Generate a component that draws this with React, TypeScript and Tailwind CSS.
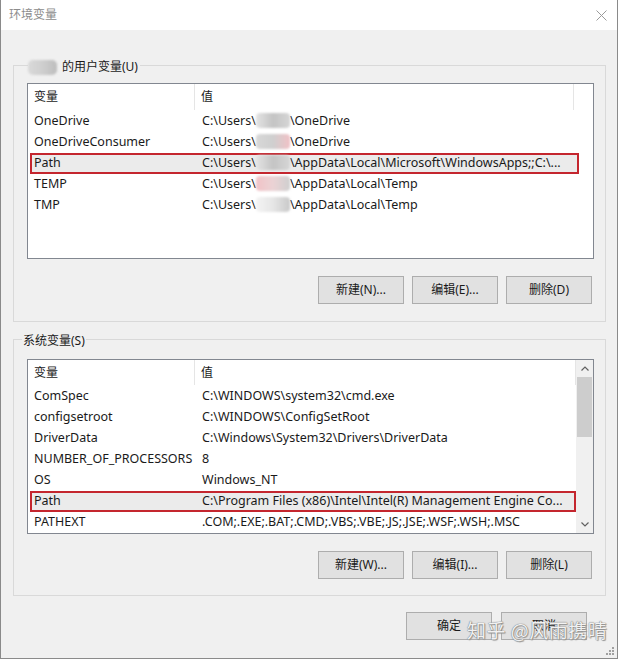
import React from "react";

type Cell = string | { blur: "gray" | "pink" | "mix" | "light" };

const userRows: { name: string; value: Cell[]; marked?: boolean }[] = [
  { name: "OneDrive", value: ["C:\\Users\\", { blur: "gray" }, "\\OneDrive"] },
  { name: "OneDriveConsumer", value: ["C:\\Users\\", { blur: "mix" }, "\\OneDrive"] },
  {
    name: "Path",
    value: ["C:\\Users\\", { blur: "gray" }, "\\AppData\\Local\\Microsoft\\WindowsApps;;C:\\..."],
    marked: true,
  },
  { name: "TEMP", value: ["C:\\Users\\", { blur: "pink" }, "\\AppData\\Local\\Temp"] },
  { name: "TMP", value: ["C:\\Users\\", { blur: "light" }, "\\AppData\\Local\\Temp"] },
];

const systemRows: { name: string; value: Cell[]; marked?: boolean }[] = [
  { name: "ComSpec", value: ["C:\\WINDOWS\\system32\\cmd.exe"] },
  { name: "configsetroot", value: ["C:\\WINDOWS\\ConfigSetRoot"] },
  { name: "DriverData", value: ["C:\\Windows\\System32\\Drivers\\DriverData"] },
  { name: "NUMBER_OF_PROCESSORS", value: ["8"] },
  { name: "OS", value: ["Windows_NT"] },
  { name: "Path", value: ["C:\\Program Files (x86)\\Intel\\Intel(R) Management Engine Co..."], marked: true },
  { name: "PATHEXT", value: [".COM;.EXE;.BAT;.CMD;.VBS;.VBE;.JS;.JSE;.WSF;.WSH;.MSC"] },
];

function Blur({ kind }: { kind: "gray" | "pink" | "mix" | "light" }) {
  const tone = {
    gray: "from-[#e4e4e4] via-[#c4c4c4] to-[#d6d6d6]",
    pink: "from-[#f1c3c7] via-[#ebd3d5] to-[#cfcfcf]",
    mix: "from-[#d8d8d8] via-[#cfcfcf] to-[#f0c1c6]",
    light: "from-[#f4f4f4] via-[#e6e6e6] to-[#c9c9c9]",
  }[kind];
  return (
    <span className={`inline-block w-[34px] h-[15px] rounded-[4px] bg-linear-to-r blur-[1px] ${tone}`} />
  );
}

function Button({ label }: { label: string }) {
  return (
    <div className="w-[86px] h-[28px] flex items-center justify-center bg-[#e1e1e1] border border-[#adadad] text-[#1a1a1a]">
      {label}
    </div>
  );
}

function Row({
  name,
  value,
  marked,
  boxRight,
}: {
  name: string;
  value: Cell[];
  marked?: boolean;
  boxRight: string;
}) {
  return (
    <div className="relative h-[21px] flex items-center whitespace-nowrap text-[12.5px]">
      {marked && (
        <div className={`absolute left-[2px] top-[1px] bottom-[-1px] bg-[#ebebeb] border-2 border-[#c4262e] ${boxRight}`} />
      )}
      <div className="relative w-[168px] pl-[6px]">{name}</div>
      <div className="relative pl-[6px] flex items-center">
        {value.map((v, i) =>
          typeof v === "string" ? <span key={i}>{v}</span> : <Blur key={i} kind={v.blur} />
        )}
      </div>
    </div>
  );
}

function Header({ cls }: { cls: string }) {
  return (
    <div className={`flex items-center ${cls}`}>
      <div className="w-[167px] h-full flex items-center pl-[6px] border-r border-[#e5e5e5]">变量</div>
      <div className="flex-1 h-full flex items-center pl-[6px] border-r border-[#e5e5e5]">值</div>
    </div>
  );
}

export default function App() {
  return (
    <div className="w-[618px] h-[659px] bg-[#f0f0f0] border-x border-b border-[#8a8a8a] text-[12px] leading-[16px] text-[#1a1a1a] font-['Segoe_UI','Noto_Sans','Noto_Sans_CJK_SC',sans-serif] relative overflow-hidden">
      {/* title bar */}
      <div className="h-[30px] bg-white flex items-center justify-between pl-[8px] pr-[10px]">
        <span className="text-[#8c8c8c]">环境变量</span>
        <svg width="11" height="11" viewBox="0 0 11 11">
          <path d="M0.5 0.5 L10.5 10.5 M10.5 0.5 L0.5 10.5" stroke="#9a9a9a" strokeWidth="1" />
        </svg>
      </div>

      {/* user variables */}
      <div className="relative ml-[12px] mt-[35px] w-[593px] h-[257px] border border-[#d9d9d9]">
        <div className="absolute left-[14px] -top-[7px] flex items-center bg-[#f0f0f0] pr-[2px]">
          <span className="inline-block w-[29px] h-[15px] rounded-[5px] bg-linear-to-r from-[#d9d9d9] via-[#cfcfcf] to-[#bdbdbd] blur-[1px] mr-[5px]" />
          <span>的用户变量(U)</span>
        </div>
        <div className="ml-[13px] mt-[17px] w-[567px] h-[176px] bg-white border border-[#828790] overflow-hidden">
          <Header cls="h-[26px] w-[546px]" />
          {userRows.map((r) => (
            <Row key={r.name} {...r} boxRight="right-[14px]" />
          ))}
        </div>
        <div className="ml-[13px] mt-[17px] w-[567px] flex justify-end gap-[8px] pr-[2px]">
          <Button label="新建(N)..." />
          <Button label="编辑(E)..." />
          <Button label="删除(D)" />
        </div>
      </div>

      {/* system variables */}
      <div className="relative ml-[12px] mt-[17px] w-[593px] h-[257px] border border-[#d9d9d9]">
        <div className="absolute left-[8px] -top-[7px] bg-[#f0f0f0] px-[1px]">系统变量(S)</div>
        <div className="ml-[13px] mt-[19px] w-[567px] h-[175px] bg-white border border-[#828790] overflow-hidden flex">
          <div className="flex-1">
            <Header cls="h-[25px] w-full" />
            {systemRows.map((r) => (
              <Row key={r.name} {...r} boxRight="right-[0px]" />
            ))}
          </div>
          <div className="w-[17px] h-full bg-[#f0f0f0] flex flex-col">
            <div className="h-[17px] flex items-center justify-center">
              <svg width="8" height="5" viewBox="0 0 8 5">
                <path d="M0.5 4.5 L4 1 L7.5 4.5" stroke="#606060" strokeWidth="1.2" fill="none" />
              </svg>
            </div>
            <div className="mx-[1px] h-[60px] bg-[#cdcdcd]" />
            <div className="flex-1" />
            <div className="h-[17px] flex items-center justify-center">
              <svg width="8" height="5" viewBox="0 0 8 5">
                <path d="M0.5 0.5 L4 4 L7.5 0.5" stroke="#606060" strokeWidth="1.2" fill="none" />
              </svg>
            </div>
          </div>
        </div>
        <div className="ml-[13px] mt-[17px] w-[567px] flex justify-end gap-[8px] pr-[2px]">
          <Button label="新建(W)..." />
          <Button label="编辑(I)..." />
          <Button label="删除(L)" />
        </div>
      </div>

      {/* dialog buttons */}
      <div className="mt-[16px] flex justify-end gap-[9px] pr-[30px]">
        <Button label="确定" />
        <Button label="取消" />
      </div>

      {/* watermark */}
      <div className="absolute left-[466px] top-[619px] text-[19px] leading-[22px] tracking-[0.5px] text-white/90 font-['Noto_Sans_CJK_SC',sans-serif] [text-shadow:0_0_1px_#777,0_0_1px_#777,1px_1px_1px_#999]">
        知乎 @风雨携晴
      </div>

      {/* resize grip */}
      <svg className="absolute right-[3px] bottom-[3px]" width="10" height="8" viewBox="0 0 10 8">
        <rect x="8" y="0" width="2" height="2" fill="#a0a0a0" />
        <rect x="5" y="3" width="2" height="2" fill="#a0a0a0" />
        <rect x="8" y="3" width="2" height="2" fill="#a0a0a0" />
        <rect x="2" y="6" width="2" height="2" fill="#a0a0a0" />
        <rect x="5" y="6" width="2" height="2" fill="#a0a0a0" />
        <rect x="8" y="6" width="2" height="2" fill="#a0a0a0" />
      </svg>
    </div>
  );
}
